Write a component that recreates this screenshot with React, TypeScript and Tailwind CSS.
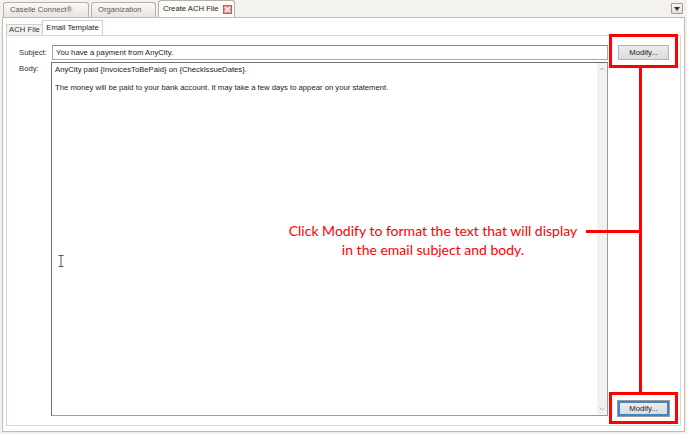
import type React from "react";

function TopTab({
  label,
  width,
  active,
  children,
}: {
  label: string;
  width: string;
  active?: boolean;
  children?: React.ReactNode;
}) {
  return (
    <div
      className={`flex items-center justify-between whitespace-nowrap rounded-t-[3px] border border-b-0 border-[#b9aea6] ${width} ${
        active
          ? "h-[17px] bg-[#fbfbfa] pl-[4px] pr-[2px] text-[#1e1e1e]"
          : "h-[15px] bg-gradient-to-b from-[#fbfaf8] to-[#e7e3de] pl-[6px] pr-[3px] text-[#5a5a5a]"
      }`}
    >
      <span>{label}</span>
      {children}
    </div>
  );
}

function ModifyButton({ focused }: { focused?: boolean }) {
  return (
    <button
      className={`flex h-[15px] w-[51px] items-center justify-center bg-gradient-to-b from-[#ececec] to-[#dcdcdc] text-[#222] ${
        focused
          ? "border-2 border-[#3d85c6] outline outline-1 outline-[#9a9a9a]"
          : "border border-[#b4b4b4]"
      }`}
    >
      Modify...
    </button>
  );
}

export default function App() {
  return (
    <div className="relative h-[434px] w-[687px] overflow-hidden bg-[#f4f2ef] font-['Liberation_Sans',Arial,sans-serif] text-[7.7px] text-[#222]">
      {/* Document tabs */}
      <div className="flex h-[17px] items-end gap-[2px] pl-[3px] pr-[4px]">
        <TopTab label="Caselle Connect®" width="w-[86px]" />
        <TopTab label="Organization" width="w-[65px]" />
        <TopTab label="Create ACH File" width="w-[77px]" active>
          <span className="flex h-[9px] w-[9px] items-center justify-center border border-[#d9534f] bg-[#f28b8b]">
            <svg width="7" height="7" viewBox="0 0 7 7">
              <path d="M1 1 L6 6 M6 1 L1 6" stroke="#fff" strokeWidth="1.4" />
            </svg>
          </span>
        </TopTab>
        <div className="mb-[3px] ml-auto flex h-[11px] w-[12px] items-center justify-center rounded-[1px] border border-[#a59a90] bg-gradient-to-b from-[#f8f6f2] to-[#e2ddd6]">
          <svg width="6" height="4" viewBox="0 0 6 4">
            <path d="M0 0 H6 L3 4 Z" fill="#333" />
          </svg>
        </div>
      </div>

      {/* Outer panel */}
      <div className="mx-[2px] flex h-[415px] w-[683px] flex-col border border-[#c8bab1] bg-white px-[3px] pb-[5px] pt-[2px]">
        {/* Inner tabs */}
        <div className="flex h-[15px] items-end">
          <div className="flex h-[11px] w-[36px] items-center justify-center whitespace-nowrap border border-b-0 border-r-0 border-[#cfcfcf] bg-[#f3f3f3] text-[#333]">
            ACH File
          </div>
          <div className="flex h-[15px] w-[61px] items-center justify-center whitespace-nowrap border border-b-0 border-[#cfcfcf] bg-white">
            Email Template
          </div>
        </div>

        {/* Email template panel */}
        <div className="flex flex-1 gap-[10px] border border-[#d8d8d8] bg-white pb-[9px] pl-[12px] pr-[11px] pt-[9px]">
          <div className="flex flex-1 flex-col gap-[2px]">
            <div className="flex h-[15px] items-center">
              <span className="w-[33px] text-[#333]">Subject:</span>
              <div className="flex h-full flex-1 items-center border border-[#a8a8a8] border-t-[#8c8c8c] bg-white pl-[3px]">
                You have a payment from AnyCity.
              </div>
            </div>
            <div className="flex flex-1">
              <span className="w-[32px] pt-[1px] text-[#333]">Body:</span>
              <div className="flex flex-1 border border-[#9c9c9c] border-l-[#6f6f6f] border-t-[#6f6f6f] bg-white">
                <div className="flex-1 pl-[3px] pt-[2px] leading-[9px]">
                  <p>AnyCity paid {"{InvoicesToBePaid}"} on {"{CheckIssueDates}"}.</p>
                  <p className="mt-[9px]">
                    The money will be paid to your bank account. It may take a few days to appear on your statement.
                  </p>
                </div>
                <div className="flex w-[10px] flex-col items-center justify-between bg-[#f1f1f1] py-[4px]">
                  <svg width="6" height="4" viewBox="0 0 6 4">
                    <path d="M0.5 3.5 L3 1 L5.5 3.5" fill="none" stroke="#b5b5b5" strokeWidth="1" />
                  </svg>
                  <svg width="6" height="4" viewBox="0 0 6 4">
                    <path d="M0.5 0.5 L3 3 L5.5 0.5" fill="none" stroke="#b5b5b5" strokeWidth="1" />
                  </svg>
                </div>
              </div>
            </div>
          </div>
          <div className="flex w-[51px] flex-col justify-between">
            <ModifyButton />
            <ModifyButton focused />
          </div>
        </div>
      </div>

      {/* Text cursor */}
      <svg className="absolute left-[58px] top-[255px]" width="6" height="12" viewBox="0 0 6 12">
        <path d="M0.5 0.5 H5.5 M3 0.5 V11.5 M0.5 11.5 H5.5" stroke="#555" strokeWidth="1" fill="none" />
      </svg>

      {/* Callout */}
      <div className="absolute left-[609px] top-[34px] h-[34px] w-[69px] border-[3px] border-[#ff0000]" />
      <div className="absolute left-[609px] top-[392px] h-[32px] w-[69px] border-[3px] border-[#ff0000]" />
      <div className="absolute left-[639px] top-[67px] h-[326px] w-[3px] bg-[#ff0000]" />
      <div className="absolute left-[586px] top-[230px] h-[3px] w-[55px] bg-[#ff0000]" />
      <div className="absolute left-[263px] top-[221px] w-[340px] text-center font-['Lato',sans-serif] text-[14px] leading-[19px] text-[#ff0000]">
        Click Modify to format the text that will display
        <br />
        in the email subject and body.
      </div>
    </div>
  );
}
